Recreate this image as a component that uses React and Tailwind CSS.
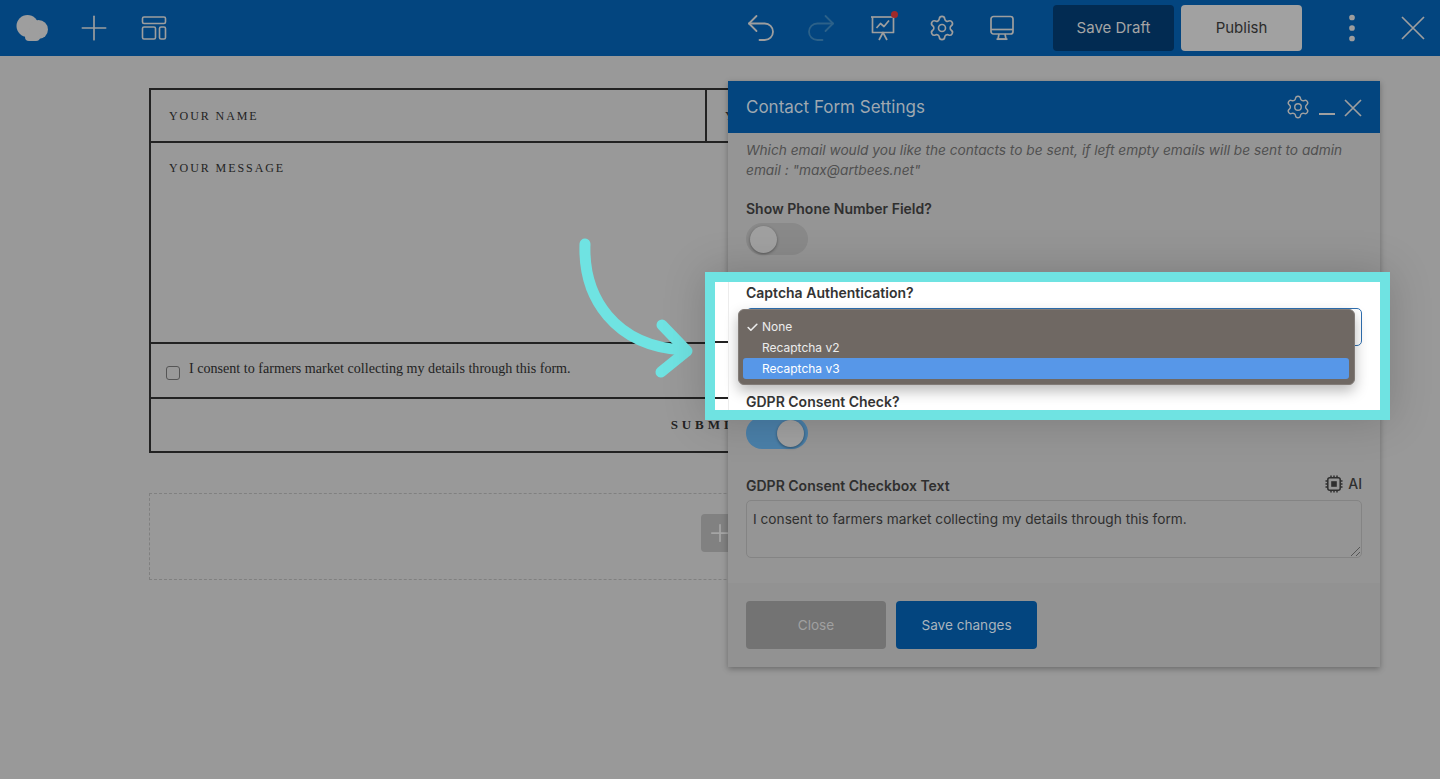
import { Undo2, Redo2, Settings, Plus, EllipsisVertical, Check } from "lucide-react";

const Toggle = ({ on }) => (
  <div className={`w-[62px] h-8 rounded-full flex items-center px-1 ${on ? "bg-[#4a7fa8] justify-end" : "bg-[#898989]"}`}>
    <div className="w-[27px] h-[27px] rounded-full bg-[#a0a0a0] shadow-[0_1px_3px_rgba(0,0,0,0.4)]" />
  </div>
);

const Cross = ({ size, stroke = 1.7, color = "#9e9e9e" }) => (
  <svg width={size} height={size} viewBox={`0 0 ${size} ${size}`} fill="none" stroke={color} strokeWidth={stroke}>
    <path d={`M1 1L${size - 1} ${size - 1}M${size - 1} 1L1 ${size - 1}`} />
  </svg>
);

const Logo = () => (
  <svg width="34" height="28" viewBox="0 0 34 28" fill="#9e9e9e">
    <circle cx="12.5" cy="12" r="11" />
    <circle cx="23.5" cy="15.5" r="9.5" />
    <rect x="10" y="16" width="15" height="11" rx="4" />
  </svg>
);

const LayoutIcon = () => (
  <svg width="26" height="26" viewBox="0 0 26 26" fill="none" stroke="#9e9e9e" strokeWidth="1.6">
    <rect x="1.5" y="2" width="23" height="6.5" rx="1.5" />
    <rect x="1.5" y="12" width="13" height="12" rx="1.5" />
    <rect x="18.5" y="12" width="6" height="12" rx="1.5" />
  </svg>
);

const BoardIcon = () => (
  <div className="relative w-[26px] h-[26px]">
    <svg width="26" height="26" viewBox="0 0 26 26" fill="none" stroke="#9e9e9e" strokeWidth="1.7" strokeLinejoin="round">
      <path d="M1 2h24" />
      <path d="M2.5 2v15.5h21V2" />
      <path d="M6.5 13l4-4.5 3.5 3 5-6" />
      <path d="M9 25l4-7.5 4 7.5" />
    </svg>
    <div className="absolute -top-[4px] right-[-2px] w-[7px] h-[7px] rounded-full bg-[#a02a2a]" />
  </div>
);

const MonitorIcon = () => (
  <svg width="26" height="26" viewBox="0 0 26 26" fill="none" stroke="#9e9e9e" strokeWidth="1.7" strokeLinejoin="round">
    <rect x="2" y="1.5" width="22" height="17.5" rx="2.5" />
    <path d="M2 14.5h22" />
    <path d="M10 19l-1 5h8l-1-5" />
    <path d="M7.5 24.2h11" />
  </svg>
);

const CpuIcon = () => (
  <svg width="18" height="18" viewBox="0 0 18 18" fill="none" stroke="#2f2f2f" strokeWidth="1.5">
    <rect x="2.8" y="2.8" width="12.4" height="12.4" rx="2" />
    <rect x="6.2" y="6.2" width="5.6" height="5.6" fill="#2f2f2f" stroke="none" />
    <path d="M6 0.5v2M9 0.5v2M12 0.5v2M6 15.5v2M9 15.5v2M12 15.5v2M0.5 6h2M0.5 9h2M0.5 12h2M15.5 6h2M15.5 9h2M15.5 12h2" />
  </svg>
);

const Arrow = () => (
  <svg width="130" height="150" viewBox="0 0 130 150" fill="none" stroke="#6fe3e2" strokeWidth="11" strokeLinecap="round" strokeLinejoin="round">
    <path d="M10 6C8 60 40 108 108 112" />
    <path d="M87 87L112 113L86 134" />
  </svg>
);

export default function App() {
  return (
    <div className="relative h-[779px] overflow-hidden flex flex-col bg-[#999999] font-['Inter',sans-serif] text-[#2f2f2f]">
      {/* top bar */}
      <header className="h-14 shrink-0 flex items-center bg-[#03457f] pl-[15px] pr-[15px]">
        <Logo />
        <Plus className="ml-[25px] w-[40px] h-[40px] text-[#9e9e9e]" strokeWidth={1} />
        <div className="ml-[27px]"><LayoutIcon /></div>
        <div className="flex-1" />
        <Undo2 className="w-[36px] h-[36px] text-[#9e9e9e]" strokeWidth={1.2} />
        <Redo2 className="ml-[24px] w-[36px] h-[36px] text-[#2c6189]" strokeWidth={1.2} />
        <div className="ml-[31px]"><BoardIcon /></div>
        <Settings className="ml-[32px] w-[28px] h-[28px] text-[#9e9e9e]" strokeWidth={1.4} />
        <div className="ml-[33px]"><MonitorIcon /></div>
        <button className="ml-[38px] w-[121px] h-[46px] rounded bg-[#022b52] text-[#a5a5a5] text-[15px]">Save Draft</button>
        <button className="ml-[7px] w-[121px] h-[46px] rounded bg-[#a1a1a1] text-[#2b2b2b] text-[15px]">Publish</button>
        <EllipsisVertical className="ml-[32px] w-[36px] h-[36px] text-[#9e9e9e]" strokeWidth={1.8} />
        <div className="ml-[31px]"><Cross size={24} /></div>
      </header>

      {/* page canvas */}
      <main className="flex-1 pt-8 px-[149px] font-['Liberation_Serif',serif] text-[#232323]">
        <div className="border-2 border-[#222]">
          <div className="h-[53px] flex border-b-2 border-[#222]">
            <div className="w-[556px] border-r-2 border-[#222] flex items-center pl-[18px] text-[12px] tracking-[0.16em]">YOUR NAME</div>
            <div className="flex-1 flex items-center pl-[18px] text-[12px] tracking-[0.16em]">YOUR EMAIL</div>
          </div>
          <div className="h-[201px] border-b-2 border-[#222] pl-[18px] pt-[17px] text-[12px] leading-4 tracking-[0.16em]">YOUR MESSAGE</div>
          <div className="h-[55px] border-b-2 border-[#222] flex items-center pl-[15px]">
            <div className="mt-1 w-[14px] h-[14px] rounded-[3px] border border-[#555]" />
            <span className="ml-[9px] mb-1 text-[14.1px]">I consent to farmers market collecting my details through this form.</span>
          </div>
          <div className="h-[52px] flex items-center justify-center pr-6 text-[13px] font-bold tracking-[0.3em]">SUBMIT</div>
        </div>
        <div className="mt-10 h-[87px] border border-dashed border-[#808080] flex items-center justify-center">
          <div className="mb-[7px] w-[38px] h-[38px] rounded bg-[#818181] flex items-center justify-center">
            <Plus className="w-7 h-7 text-[#a5a5a5]" strokeWidth={1.5} />
          </div>
        </div>
      </main>

      {/* settings modal */}
      <section className="absolute left-[728px] top-[81px] w-[652px] h-[586px] flex flex-col bg-[#959595] shadow-[0_2px_6px_rgba(0,0,0,0.3)]">
        <div className="h-[52px] shrink-0 flex items-center bg-[#03457f] pl-[18px] pr-[18px] text-[#a0a0a0]">
          <h2 className="mt-px text-[17px] text-[#9fa8b0]">Contact Form Settings</h2>
          <div className="flex-1" />
          <Settings className="w-[26px] h-[26px]" strokeWidth={1.3} />
          <div className="ml-[8px] mt-[13px] w-4 h-[2px] bg-[#a0a0a0]" />
          <div className="ml-[9px] mt-[2px]"><Cross size={18} /></div>
        </div>
        <div className="flex-1 px-[18px] pt-[7px]">
          <p className="text-[13.7px] leading-[20px] italic text-[#505050]">Which email would you like the contacts to be sent, if left empty emails will be sent to admin<br />email : "max@artbees.net"</p>
          <div className="mt-[19px] text-[14px] leading-[20px] font-semibold">Show Phone Number Field?</div>
          <div className="mt-1"><Toggle /></div>
          <div className="mt-[162px]"><Toggle on /></div>
          <div className="mt-[28px] h-[17px] flex items-center justify-between">
            <span className="text-[14px] font-semibold">GDPR Consent Checkbox Text</span>
            <span className="mb-1 flex items-center gap-[5px] text-[14px] font-medium"><CpuIcon />AI</span>
          </div>
          <div className="relative mt-[6px] h-[58px] rounded-[5px] border border-[#848484] px-[6px] py-[8px] text-[13.7px] leading-[20px]">
            I consent to farmers market collecting my details through this form.
            <svg className="absolute right-[1px] bottom-[1px]" width="9" height="9" viewBox="0 0 9 9" stroke="#555" strokeWidth="1"><path d="M0 9L9 0M5 9L9 5" /></svg>
          </div>
        </div>
        <div className="h-[84px] shrink-0 flex items-center gap-[10px] bg-[#929292] px-[18px]">
          <button className="w-[140px] h-[48px] rounded bg-[#737373] text-[13.6px] text-[#a0a0a0]">Close</button>
          <button className="w-[141px] h-[48px] rounded bg-[#03457f] text-[13.6px] text-[#a9b4bd]">Save changes</button>
        </div>
      </section>

      {/* callout */}
      <div className="absolute left-[575px] top-[238px]"><Arrow /></div>
      <div className="absolute left-[705px] top-[272px] w-[685px] h-[148px] border-[10px] border-[#6fe3e2] bg-white shadow-[0_0_40px_rgba(0,0,0,0.18)]">
        <div className="relative h-full pl-[31px] pr-[18px]">
          <div className="pt-px text-[14px] leading-[20px] font-semibold text-[#333]">Captcha Authentication?</div>
          <div className="mt-[5px] h-[38px] rounded-[5px] border border-[#2f6fb0] flex justify-end">
            <div className="w-[39px] border-l border-[#d5d5d5]" />
          </div>
          <div className="absolute left-[23px] top-[27px] w-[617px] h-[76px] rounded-[6px] bg-[#6f6863] border border-[#827c78] pl-[4px] pr-[5px] pt-[6px] text-[12px] text-[#ececec] shadow-[0_6px_14px_rgba(0,0,0,0.28)]">
            <div className="relative h-[21px] leading-[21px] pl-[19px]">
              <Check className="absolute left-[3px] top-[5px] w-[13px] h-[13px]" strokeWidth={3} />
              None
            </div>
            <div className="h-[21px] leading-[21px] pl-[19px]">Recaptcha v2</div>
            <div className="h-[21px] leading-[21px] pl-[19px] rounded-[3px] bg-[#5797e8] text-white">Recaptcha v3</div>
          </div>
          <div className="absolute left-[31px] top-[110px] text-[14px] leading-[20px] font-semibold text-[#333]">GDPR Consent Check?</div>
          <div className="absolute left-0 top-[59px] w-[13px] h-[2px] bg-[#222]" />
          <div className="absolute left-0 top-[115px] w-[13px] h-[2px] bg-[#222]" />
          <div className="absolute left-[13px] top-0 bottom-0 w-px bg-[#ececec]" />
        </div>
      </div>
    </div>
  );
}
